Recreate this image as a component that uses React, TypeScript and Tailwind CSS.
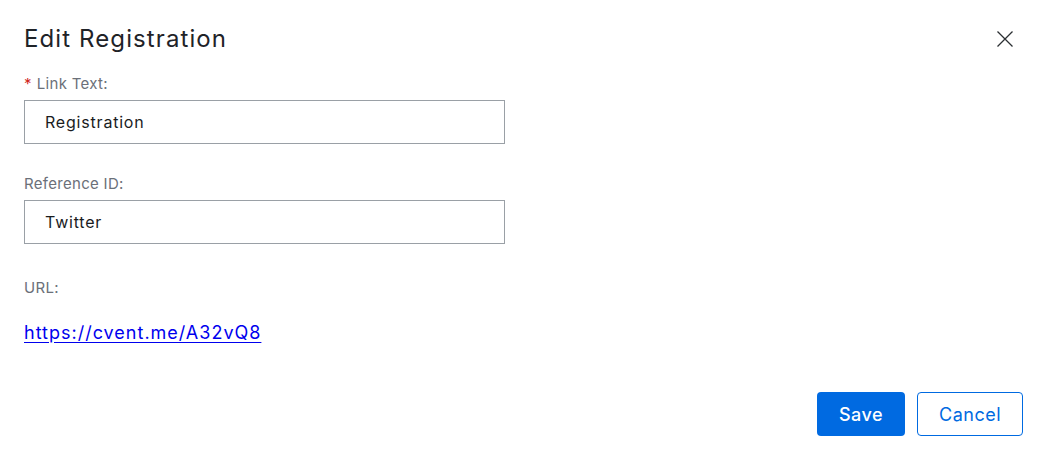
export default function App() {
  return (
    <div
      className="relative h-[462px] w-[1050px] bg-white pl-6 pr-[27px] pt-[23px] text-[#1f2328]"
      style={{ fontFamily: "Inter, 'Noto Sans', sans-serif" }}
    >
      {/* Header */}
      <div className="flex items-center justify-between">
        <h1 className="text-[24px] leading-8 font-normal tracking-[1.1px]">Edit Registration</h1>
        <button aria-label="Close" className="mr-[10px] flex h-4 w-4 items-center justify-center">
          <svg width="16" height="16" viewBox="0 0 16 16" fill="none" stroke="#2b2f33" strokeWidth="1.3">
            <path d="M0.5 0.5L15.5 15.5M15.5 0.5L0.5 15.5" />
          </svg>
        </button>
      </div>

      {/* Form */}
      <div className="mt-[19px] w-[481px]">
        <Field label="Link Text:" required value="Registration" />
        <div className="mt-[30px]">
          <Field label="Reference ID:" value="Twitter" />
        </div>

        <p className="mt-[34px] text-[15px] leading-5 tracking-[0.3px] text-[#6b7079]">URL:</p>
        <a
          href="#"
          className="mt-[23px] block text-[18px] leading-6 tracking-[1px] text-[#0000ee] underline underline-offset-[3px]"
        >
          https://cvent.me/A32vQ8
        </a>
      </div>

      {/* Footer */}
      <div className="mt-[47px] flex justify-end gap-3">
        <button className="h-11 w-[88px] rounded-[4px] bg-[#006ae1] text-[18px] font-medium tracking-[0.5px] text-white">
          Save
        </button>
        <button className="h-11 w-[106px] rounded-[4px] border border-[#006ae1] bg-white text-[18px] font-normal tracking-[0.5px] text-[#006ae1]">
          Cancel
        </button>
      </div>
    </div>
  );
}

function Field({ label, value, required }: { label: string; value: string; required?: boolean }) {
  return (
    <div>
      <label className="flex items-center text-[15px] leading-5 tracking-[0.3px] text-[#6b7079]">
        {required && <span className="mr-[5px] text-[#d0271d]">*</span>}
        {label}
      </label>
      <div className="mt-[6px] flex h-11 items-center border border-[#9aa0a6] pl-5 text-[16px] tracking-[0.8px] text-[#1a1c1e]">
        {value}
      </div>
    </div>
  );
}
